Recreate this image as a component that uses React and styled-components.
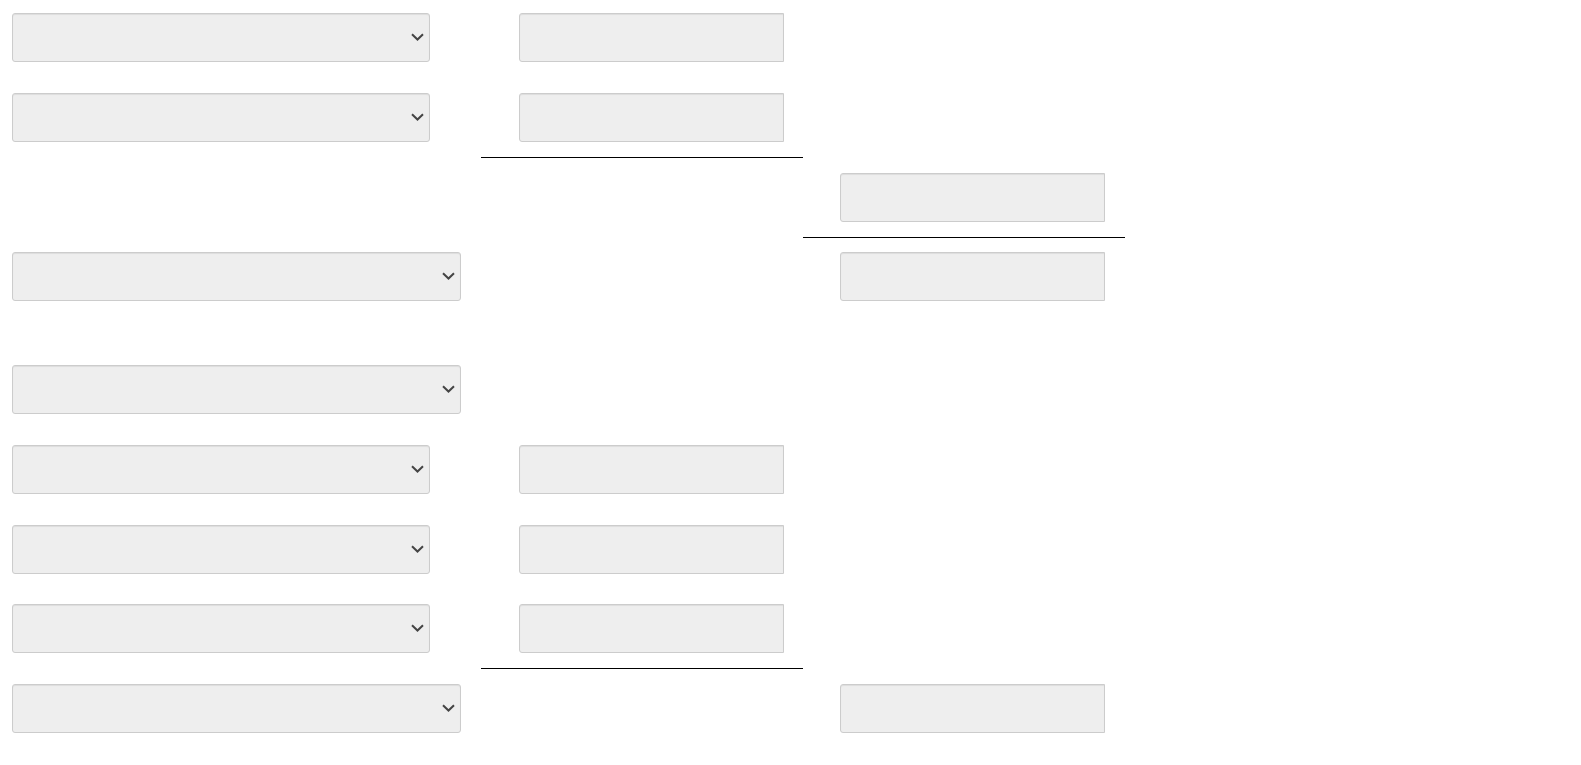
import styled, { createGlobalStyle } from 'styled-components';

const GlobalStyle = createGlobalStyle`
  html, body {
    margin: 0;
    padding: 0;
    background: #fff;
    font-family: 'Liberation Sans', Arial, sans-serif;
  }
`;

const Page = styled.div`
  padding: 13px 0 0 12px;
`;

const Group = styled.div`
  display: flex;
  flex-direction: column;
  margin-bottom: ${(p) => p.$after || 0}px;
`;

const Row = styled.div`
  display: grid;
  grid-template-columns: 469px 322px 322px;
  height: 79.75px;
  align-items: start;
`;

const Cell = styled.div`
  height: 49px;
  padding-left: ${(p) => p.$indent || 0}px;
  ${(p) =>
    p.$rule &&
    `
    padding-bottom: 15px;
    border-bottom: 1px solid #000;
  `}
`;

const SelectWrap = styled.div`
  position: relative;
  width: ${(p) => (p.$wide ? 449 : 418)}px;
  height: 49px;
`;

const Select = styled.select`
  appearance: none;
  -webkit-appearance: none;
  box-sizing: border-box;
  width: 100%;
  height: 100%;
  margin: 0;
  padding: 0 30px 0 12px;
  background: #eee;
  border: 1px solid #ccc;
  border-radius: 3px;
  box-shadow: inset 0 1px 1px rgba(0, 0, 0, 0.075);
  font-family: inherit;
  font-size: 16px;
  color: #555;
  outline: none;
`;

const Chevron = styled.svg`
  position: absolute;
  right: 6px;
  top: 20px;
  width: 13px;
  height: 8px;
  pointer-events: none;
`;

const Field = styled.input`
  box-sizing: border-box;
  display: block;
  width: 265px;
  height: 49px;
  margin: 0;
  padding: 0 12px;
  background: #eee;
  border: 1px solid #ccc;
  border-radius: 3px 0 0 3px;
  box-shadow: inset 0 1px 1px rgba(0, 0, 0, 0.075);
  font-family: inherit;
  font-size: 16px;
  color: #555;
  outline: none;
`;

function Dropdown({ wide }) {
  return (
    <SelectWrap $wide={wide}>
      <Select defaultValue="">
        <option value=""></option>
      </Select>
      <Chevron viewBox="0 0 13 8">
        <path
          d="M1 1.2 L6.5 6.5 L12 1.2"
          fill="none"
          stroke="#444"
          strokeWidth="2"
        />
      </Chevron>
    </SelectWrap>
  );
}

// each row: select kind, middle input, middle rule, right input, right rule
const topRows = [
  { select: 'narrow', mid: true },
  { select: 'narrow', mid: true, midRule: true },
  { right: true, rightRule: true },
  { select: 'wide', right: true },
];

const bottomRows = [
  { select: 'wide' },
  { select: 'narrow', mid: true },
  { select: 'narrow', mid: true },
  { select: 'narrow', mid: true, midRule: true },
  { select: 'wide', right: true },
];

function FormRow({ row }) {
  return (
    <Row>
      <Cell>{row.select && <Dropdown wide={row.select === 'wide'} />}</Cell>
      <Cell $indent={38} $rule={row.midRule}>
        {row.mid && <Field type="text" />}
      </Cell>
      <Cell $indent={37} $rule={row.rightRule}>
        {row.right && <Field type="text" />}
      </Cell>
    </Row>
  );
}

export default function App() {
  return (
    <>
      <GlobalStyle />
      <Page>
        <Group $after={33}>
          {topRows.map((row, i) => (
            <FormRow key={i} row={row} />
          ))}
        </Group>
        <Group>
          {bottomRows.map((row, i) => (
            <FormRow key={i} row={row} />
          ))}
        </Group>
      </Page>
    </>
  );
}
